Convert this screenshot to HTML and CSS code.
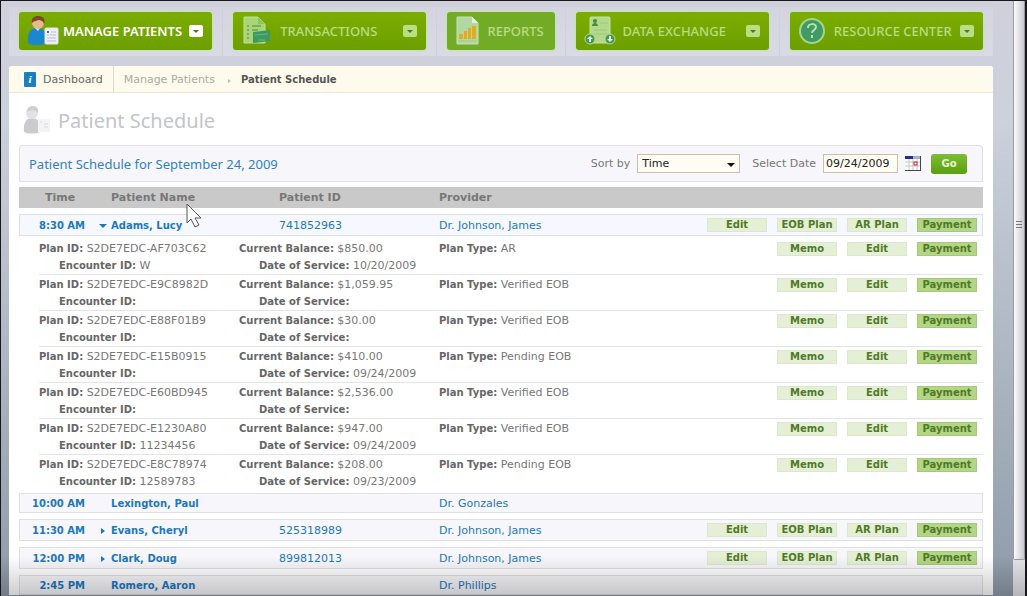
FILE: index.html
```html
<!DOCTYPE html>
<html lang="en">
<head>
    <meta charset="UTF-8">
    <meta name="viewport" content="width=device-width, initial-scale=1.0">
    <title>Patient Schedule</title>
    <link rel="stylesheet" href="styles.css">
</head>
<body>
    <div class="page">
        <nav>
            <ul class="main-nav">
                <li class="nav-item">
                    <button class="nav-button active">
                        <svg class="nav-icon" viewBox="0 0 32 30">
                            <path d="M1 27C0 17 3 12 10 12s10 5 9 15c-5 3-13 3-18 0z" fill="#1c86cf"/>
                            <path d="M8 12l3 3 2-3z" fill="#d9ecf8"/>
                            <circle cx="11" cy="7" r="6" fill="#e8b98c"/>
                            <path d="M5 7C4 2 7 0 11 0s8 2 6 8c-1-3-3-4-5-4-3 1-5 1-7 3z" fill="#7b4a22"/>
                            <rect x="18" y="12" width="13" height="16" rx="1" fill="#eef1f7" stroke="#dde3ec"/>
                            <circle cx="21" cy="16" r="1" fill="#334"/>
                            <path d="M20 19h2M24 16h5M23 19h6M20 22h9M20 25h9" stroke="#b3bdd0"/>
                        </svg>
                        <span class="nav-label">MANAGE PATIENTS</span>
                        <span class="nav-caret"></span>
                    </button>
                </li>
                <li class="nav-item">
                    <button class="nav-button">
                        <svg class="nav-icon" viewBox="0 0 32 30">
                            <path d="M3 1h14l7 7v19H3z" fill="#a9d47c" stroke="#bfe096"/>
                            <path d="M17 1v7h7" fill="#8fc45a"/>
                            <path d="M6 10h2M11 10h9M6 14h2M11 14h6M6 18h2M6 22h2" stroke="#79b052" stroke-width="2"/>
                            <path d="M12 16l17-2v11l-17 2z" fill="#3c9a5f"/>
                            <path d="M14 19l13-1M17 24h7" stroke="#69b67d"/>
                        </svg>
                        <span class="nav-label">TRANSACTIONS</span>
                        <span class="nav-caret"></span>
                    </button>
                </li>
                <li class="nav-item small">
                    <button class="nav-button light">
                        <svg class="nav-icon" viewBox="2 0 28 30">
                            <path d="M4 1h15l6 6v21H4z" fill="#b4d6a0" stroke="#c6e3ae"/>
                            <path d="M19 1v6h6z" fill="#e1efd2"/>
                            <path d="M6 18h4v5H6zM11 15h3v8h-3zM15 12h3v11h-3zM19 10h4v13h-4z" fill="#dfac22"/>
                            <path d="M5 25h19" stroke="#a3c887"/>
                        </svg>
                        <span class="nav-label">REPORTS</span>
                    </button>
                </li>
                <li class="nav-item">
                    <button class="nav-button">
                        <svg class="nav-icon" viewBox="0 0 32 30">
                            <rect x="6" y="1" width="20" height="26" rx="1" fill="#b3d98c" stroke="#c4e4a0"/>
                            <circle cx="11" cy="5" r="2" fill="#53883c"/>
                            <path d="M8 10c0-4 6-4 6 0z" fill="#53883c"/>
                            <path d="M16 7h8M10 14h13M10 18h13" stroke="#9dcb78"/>
                            <circle cx="6" cy="23" r="5" fill="#45955a" stroke="#b6dd90"/>
                            <circle cx="26" cy="23" r="5" fill="#45955a" stroke="#b6dd90"/>
                            <path d="M6 20l3 3H7v3H5v-3H3zM26 26l-3-3h2v-3h2v3h2z" fill="#e6f5da"/>
                        </svg>
                        <span class="nav-label">DATA EXCHANGE</span>
                        <span class="nav-caret"></span>
                    </button>
                </li>
                <li class="nav-item resource">
                    <button class="nav-button">
                        <svg class="nav-icon" viewBox="0 0 32 30">
                            <circle cx="14" cy="15" r="12" fill="#3f9a68" stroke="#a5d589" stroke-width="2"/>
                            <path d="M10 12c0-5 8-5 8-1 0 3-4 3-4 6M14 19v3" fill="none" stroke="#b9e2a8" stroke-width="2"/>
                        </svg>
                        <span class="nav-label">RESOURCE CENTER</span>
                        <span class="nav-caret"></span>
                    </button>
                </li>
            </ul>
        </nav>

        <main class="panel">
            <div class="breadcrumb">
                <a class="dashboard" href="#"><span class="info">i</span>Dashboard</a>
                <a class="crumb" href="#">Manage Patients</a>
                <span class="crumb-arrow"></span>
                <span class="current">Patient Schedule</span>
            </div>

            <div class="content">
                <h1>
                    <svg class="title-icon" viewBox="0 0 28 28">
                        <path d="M1 26c-1-9 2-14 8-14s9 5 8 14c-4 2-12 2-16 0z" fill="#cbcbce"/>
                        <circle cx="9" cy="7" r="6" fill="#e2e2e4"/>
                        <path d="M4 6c0-4 2-6 6-6s6 3 5 7c-2-3-7-4-11-1z" fill="#cfcfd2"/>
                        <rect x="15" y="13" width="12" height="13" fill="#f3f3f5"/>
                        <path d="M17 16h2M21 18h4M21 21h4" stroke="#dadade"/>
                    </svg>
                    Patient Schedule
                </h1>

                <form class="filter">
                    <h2>Patient Schedule for September 24, 2009</h2>
                    <label for="sort">Sort by</label>
                    <span class="select-box">
                        <select id="sort">
                            <option>Time</option>
                        </select>
                    </span>
                    <label for="date">Select Date</label>
                    <input id="date" type="text" value="09/24/2009">
                    <button class="calendar" type="button" aria-label="Calendar">
                        <svg viewBox="0 0 16 15">
                            <rect x="0" y="0" width="16" height="15" fill="#444"/>
                            <rect x="0" y="0" width="15" height="14" fill="#fff"/>
                            <path d="M0 6h15M0 10h15M4 3v11M8 3v11M12 3v11" stroke="#c9c4c0"/>
                            <rect x="0" y="0" width="8" height="3" fill="#1c2f9a"/>
                            <rect x="8" y="0" width="7" height="3" fill="#a9aec4"/>
                            <rect x="9" y="6" width="3" height="3" fill="#fff" stroke="#c02b2b"/>
                        </svg>
                    </button>
                    <button class="go" type="button">Go</button>
                </form>

                <table class="schedule">
                    <colgroup>
                        <col class="col-gutter">
                        <col class="col-time">
                        <col class="col-name">
                        <col class="col-id">
                        <col>
                        <col class="col-actions">
                    </colgroup>
                    <thead>
                        <tr>
                            <th class="time" colspan="2">Time</th>
                            <th class="name">Patient Name</th>
                            <th class="id">Patient ID</th>
                            <th>Provider</th>
                            <th></th>
                        </tr>
                    </thead>
                    <tbody class="expanded">
                        <tr class="visit selected">
                            <td class="time" colspan="2">8:30 AM</td>
                            <td class="name"><a class="toggle open" href="#">Adams, Lucy</a></td>
                            <td class="id"><a href="#">741852963</a></td>
                            <td><a href="#">Dr. Johnson, James</a></td>
                            <td><div class="actions"><button>Edit</button><button>EOB Plan</button><button>AR Plan</button><button class="pay">Payment</button></div></td>
                        </tr>
                        <tr class="plan">
                            <td></td>
                            <td colspan="2"><p><b>Plan ID:</b> S2DE7EDC-AF703C62</p><p class="sub"><b>Encounter ID:</b> W</p></td>
                            <td><p><b>Current Balance:</b> $850.00</p><p class="sub"><b>Date of Service:</b> 10/20/2009</p></td>
                            <td><p><b>Plan Type:</b> AR</p></td>
                            <td><div class="actions"><button>Memo</button><button>Edit</button><button class="pay">Payment</button></div></td>
                        </tr>
                        <tr class="plan">
                            <td></td>
                            <td colspan="2"><p><b>Plan ID:</b> S2DE7EDC-E9C8982D</p><p class="sub"><b>Encounter ID:</b></p></td>
                            <td><p><b>Current Balance:</b> $1,059.95</p><p class="sub"><b>Date of Service:</b></p></td>
                            <td><p><b>Plan Type:</b> Verified EOB</p></td>
                            <td><div class="actions"><button>Memo</button><button>Edit</button><button class="pay">Payment</button></div></td>
                        </tr>
                        <tr class="plan">
                            <td></td>
                            <td colspan="2"><p><b>Plan ID:</b> S2DE7EDC-E88F01B9</p><p class="sub"><b>Encounter ID:</b></p></td>
                            <td><p><b>Current Balance:</b> $30.00</p><p class="sub"><b>Date of Service:</b></p></td>
                            <td><p><b>Plan Type:</b> Verified EOB</p></td>
                            <td><div class="actions"><button>Memo</button><button>Edit</button><button class="pay">Payment</button></div></td>
                        </tr>
                        <tr class="plan">
                            <td></td>
                            <td colspan="2"><p><b>Plan ID:</b> S2DE7EDC-E15B0915</p><p class="sub"><b>Encounter ID:</b></p></td>
                            <td><p><b>Current Balance:</b> $410.00</p><p class="sub"><b>Date of Service:</b> 09/24/2009</p></td>
                            <td><p><b>Plan Type:</b> Pending EOB</p></td>
                            <td><div class="actions"><button>Memo</button><button>Edit</button><button class="pay">Payment</button></div></td>
                        </tr>
                        <tr class="plan">
                            <td></td>
                            <td colspan="2"><p><b>Plan ID:</b> S2DE7EDC-E60BD945</p><p class="sub"><b>Encounter ID:</b></p></td>
                            <td><p><b>Current Balance:</b> $2,536.00</p><p class="sub"><b>Date of Service:</b></p></td>
                            <td><p><b>Plan Type:</b> Verified EOB</p></td>
                            <td><div class="actions"><button>Memo</button><button>Edit</button><button class="pay">Payment</button></div></td>
                        </tr>
                        <tr class="plan">
                            <td></td>
                            <td colspan="2"><p><b>Plan ID:</b> S2DE7EDC-E1230A80</p><p class="sub"><b>Encounter ID:</b> 11234456</p></td>
                            <td><p><b>Current Balance:</b> $947.00</p><p class="sub"><b>Date of Service:</b> 09/24/2009</p></td>
                            <td><p><b>Plan Type:</b> Verified EOB</p></td>
                            <td><div class="actions"><button>Memo</button><button>Edit</button><button class="pay">Payment</button></div></td>
                        </tr>
                        <tr class="plan">
                            <td></td>
                            <td colspan="2"><p><b>Plan ID:</b> S2DE7EDC-E8C78974</p><p class="sub"><b>Encounter ID:</b> 12589783</p></td>
                            <td><p><b>Current Balance:</b> $208.00</p><p class="sub"><b>Date of Service:</b> 09/23/2009</p></td>
                            <td><p><b>Plan Type:</b> Pending EOB</p></td>
                            <td><div class="actions"><button>Memo</button><button>Edit</button><button class="pay">Payment</button></div></td>
                        </tr>
                    </tbody>
                    <tbody>
                        <tr class="visit brief">
                            <td class="time" colspan="2">10:00 AM</td>
                            <td class="name"><a href="#">Lexington, Paul</a></td>
                            <td class="id"></td>
                            <td><a href="#">Dr. Gonzales</a></td>
                            <td></td>
                        </tr>
                    </tbody>
                    <tbody>
                        <tr class="visit">
                            <td class="time" colspan="2">11:30 AM</td>
                            <td class="name"><a class="toggle" href="#">Evans, Cheryl</a></td>
                            <td class="id"><a href="#">525318989</a></td>
                            <td><a href="#">Dr. Johnson, James</a></td>
                            <td><div class="actions"><button>Edit</button><button>EOB Plan</button><button>AR Plan</button><button class="pay">Payment</button></div></td>
                        </tr>
                    </tbody>
                    <tbody>
                        <tr class="visit">
                            <td class="time" colspan="2">12:00 PM</td>
                            <td class="name"><a class="toggle" href="#">Clark, Doug</a></td>
                            <td class="id"><a href="#">899812013</a></td>
                            <td><a href="#">Dr. Johnson, James</a></td>
                            <td><div class="actions"><button>Edit</button><button>EOB Plan</button><button>AR Plan</button><button class="pay">Payment</button></div></td>
                        </tr>
                    </tbody>
                    <tbody>
                        <tr class="visit brief">
                            <td class="time" colspan="2">2:45 PM</td>
                            <td class="name"><a href="#">Romero, Aaron</a></td>
                            <td class="id"></td>
                            <td><a href="#">Dr. Phillips</a></td>
                            <td></td>
                        </tr>
                    </tbody>
                </table>
            </div>
        </main>
    </div>

    <div class="scrollbar">
        <div class="thumb"><span class="grip"></span></div>
    </div>

    <div class="fade"></div>

    <svg class="cursor" viewBox="0 0 17 25">
        <path d="M1 1v19l4-4 4 8 4-2-4-7h6z" fill="#fff" stroke="#555"/>
    </svg>
</body>
</html>
```
FILE: styles.css
```css
* {
    box-sizing: border-box;
}

body {
    display: flex;
    position: relative;
    height: 100vh;
    margin: 0;
    overflow: hidden;
    border: solid #18181c;
    border-width: 1px 2px 0 1px;
    font-family: Verdana, "DejaVu Sans", sans-serif;
    font-size: 11px;
    color: #777;
    background: linear-gradient(to bottom, #d0d0db 0, #ccd1dc 120px, #8e9ba9 100%);
}

a {
    color: inherit;
    text-decoration: none;
}

button {
    padding: 0;
    border: none;
    font-family: inherit;
    cursor: pointer;
}

.page {
    flex: 1;
    min-width: 0;
    padding: 6px 20px 0 8px;
}

/* Main navigation */
.main-nav {
    display: flex;
    gap: 1px;
    margin: 0 0 10px;
    padding: 0;
    list-style: none;
}

.nav-item {
    flex: 193 1 0;
    padding: 5px 10px 6px;
    background: linear-gradient(to bottom, #d3d4df, #d9dbe4);
}

.nav-item.small {
    flex-grow: 107;
}

.nav-button {
    display: flex;
    align-items: center;
    width: 100%;
    height: 38px;
    padding: 0 9px 0 8px;
    border-radius: 3px;
    background: linear-gradient(to bottom, #7bad00, #6c9f00);
    box-shadow: 0 0 2px 1px #c5e3b4;
    color: #b9dc86;
}

.nav-button.active {
    color: #fff;
}

.nav-button.light {
    background: #72ac27;
}

.nav-icon {
    flex: none;
    width: 32px;
    height: 30px;
}

.small .nav-icon {
    width: 28px;
}

.nav-label {
    flex: 1;
    margin-left: 7px;
    font-family: "Noto Sans", sans-serif;
    font-size: 13px;
    font-weight: 500;
    text-align: left;
    white-space: nowrap;
}

.active .nav-label {
    margin-left: 4px;
    font-weight: 600;
}

.small .nav-label,
.resource .nav-label {
    margin-left: 4px;
}

.nav-caret {
    display: flex;
    align-items: center;
    justify-content: center;
    width: 14px;
    height: 12px;
    border-radius: 2px;
    background: #b9de84;
}

.nav-caret::after {
    content: "";
    border: 3px solid transparent;
    border-top-color: #4a7a1c;
    border-bottom: none;
}

.active .nav-caret {
    background: #fff;
}

/* Panel */
.panel {
    border-radius: 3px 3px 0 0;
    background: #fff;
}

.breadcrumb {
    display: flex;
    align-items: center;
    height: 27px;
    border-bottom: 1px solid #e9e6dd;
    border-radius: 3px 3px 0 0;
    background: #fffbec;
}

.dashboard {
    display: flex;
    align-items: center;
    height: 26px;
    padding: 0 10px 0 15px;
    border-right: 1px solid #dcd9ce;
    color: #666;
}

.info {
    width: 12px;
    height: 15px;
    margin-right: 7px;
    border-radius: 1px;
    background: #1d7fbf;
    color: #fff;
    font-family: "Liberation Serif", serif;
    font-style: italic;
    font-weight: bold;
    line-height: 15px;
    text-align: center;
}

.crumb {
    margin-left: 10px;
    color: #aaa;
}

.crumb-arrow {
    margin: 4px 10px 0 13px;
    border: 2px solid transparent;
    border-left: 3px solid #bbb;
    border-right: none;
}

.current {
    color: #555;
    font-size: 10px;
    font-weight: bold;
}

.content {
    padding: 0 10px;
}

h1 {
    display: flex;
    align-items: center;
    gap: 7px;
    height: 52px;
    margin: 0;
    padding: 2px 0 0 4px;
    color: #c4c4ca;
    font-family: "Noto Sans", sans-serif;
    font-size: 20px;
    font-weight: normal;
}

.title-icon {
    width: 28px;
    height: 28px;
}

/* Filter bar */
.filter {
    display: flex;
    align-items: center;
    height: 37px;
    padding: 0 15px 0 9px;
    border: 1px solid #e0dfe4;
    border-radius: 3px 3px 0 0;
    background: #f7f6fa;
}

h2 {
    flex: 1;
    margin: 0;
    color: #2f82bd;
    font-family: "Noto Sans", sans-serif;
    font-size: 13px;
    font-weight: normal;
}

.filter label {
    margin-right: 7px;
}

.select-box {
    position: relative;
    margin-right: 12px;
}

.select-box::after {
    content: "";
    position: absolute;
    right: 5px;
    top: 9px;
    border: 4px solid transparent;
    border-top-color: #111;
    border-bottom: none;
    pointer-events: none;
}

select,
input {
    display: block;
    height: 19px;
    padding: 0 4px;
    border: 1px solid #cdbfb0;
    border-radius: 0;
    background: #fffdf3;
    color: #222;
    font-family: inherit;
    font-size: 11px;
}

select {
    appearance: none;
    width: 103px;
}

input {
    width: 75px;
    padding: 0 2px;
}

.calendar {
    width: 16px;
    height: 15px;
    margin: 0 10px 0 7px;
    background: none;
}

.calendar svg {
    display: block;
}

.go {
    width: 36px;
    height: 20px;
    border-radius: 3px;
    background: linear-gradient(to bottom, #7fbc35, #5aa010);
    color: #eaf6d8;
    font-size: 10px;
    font-weight: bold;
}

/* Schedule table */
.schedule {
    width: 100%;
    margin-top: 5px;
    border-spacing: 0;
    table-layout: fixed;
}

.col-gutter {
    width: 20px;
}

.col-time {
    width: 52px;
}

.col-name {
    width: 148px;
}

.col-id {
    width: 200px;
}

.col-actions {
    width: 290px;
}

.schedule th {
    height: 21px;
    padding: 0;
    background: #c9c9c9;
    color: #777;
    text-align: left;
}

.schedule th.time {
    padding-left: 26px;
}

.schedule .name {
    padding-left: 20px;
}

.schedule .id {
    padding-left: 40px;
}

.schedule tbody::before {
    content: "";
    display: table-row;
    height: 6px;
}

.schedule tbody.expanded + tbody::before {
    height: 3px;
}

.schedule td {
    padding: 0;
}

.visit td {
    height: 22px;
    border: solid #e0dfe4;
    border-width: 1px 0;
    background: #f7f6fa;
    color: #1c78bd;
}

.visit.brief td {
    height: 20px;
}

.visit td:first-child {
    border-left-width: 1px;
}

.visit td:last-child {
    border-right-width: 1px;
}

.visit.selected td {
    background: #f5f8ff;
}

.visit td.time {
    padding-right: 6px;
    text-align: right;
}

.visit .time,
.visit .name {
    font-size: 10px;
    font-weight: bold;
}

.toggle {
    position: relative;
}

.toggle::before {
    content: "";
    position: absolute;
    left: -10px;
    top: 3px;
    border: 3px solid transparent;
    border-left: 4px solid #1c78bd;
    border-right: none;
}

.toggle.open::before {
    left: -12px;
    top: 4px;
    border: 4px solid transparent;
    border-top-color: #1c78bd;
    border-bottom: none;
}

.plan td {
    padding-top: 1px;
    border-top: 1px solid #e4e4e8;
    vertical-align: top;
}

.plan td:first-child {
    border-top-color: transparent;
}

.visit + .plan td {
    padding-top: 3px;
    border-top-color: transparent;
}

.plan p {
    margin: 0;
    line-height: 17px;
}

.plan b {
    color: #666;
    font-size: 10px;
}

.plan .sub {
    padding-left: 20px;
}

.actions {
    display: flex;
    justify-content: flex-end;
    gap: 10px;
    padding-right: 5px;
}

.plan .actions {
    padding: 2px 6px 0 0;
}

.actions button {
    width: 60px;
    height: 14px;
    border: 1px solid #dce8cb;
    background: #e5efd6;
    color: #4f7a28;
    font-size: 10px;
    font-weight: bold;
    line-height: 12px;
    white-space: nowrap;
}

.actions .pay {
    border-color: #a3cb73;
    background: #b3d585;
}

/* Scrollbar */
.scrollbar {
    width: 12px;
    background: #e4e4e8;
}

.thumb {
    display: flex;
    align-items: center;
    justify-content: center;
    height: 94%;
    border: 1px solid #9a9aa0;
    border-top: none;
    border-radius: 0 0 2px 2px;
    background: linear-gradient(to right, #fbfbfd, #c9c9d2);
}

.grip {
    width: 6px;
    height: 8px;
    margin-bottom: 110px;
    background: repeating-linear-gradient(to bottom, #777 0, #777 1px, transparent 1px, transparent 3px);
}

/* Overlays */
.fade {
    position: absolute;
    right: 0;
    bottom: 0;
    left: 0;
    height: 40px;
    background: linear-gradient(to bottom, rgba(0, 0, 0, 0), rgba(0, 0, 0, 0.2));
    pointer-events: none;
}

.cursor {
    position: absolute;
    left: 185px;
    top: 202px;
    width: 17px;
    height: 25px;
    pointer-events: none;
}
```
